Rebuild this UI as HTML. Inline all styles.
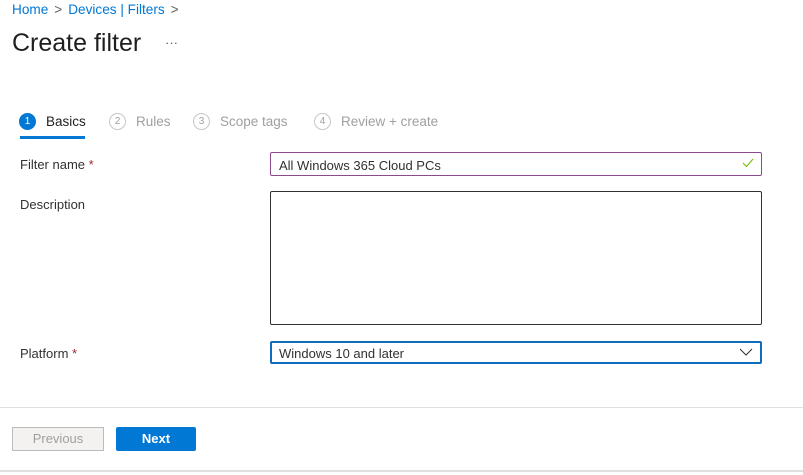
<!DOCTYPE html>
<html><head><style>
body{margin:0;width:803px;height:475px;background:#fff;font-family:"Liberation Sans",sans-serif;position:relative;overflow:hidden;color:#323130}
.a{position:absolute}
.crumb{left:12px;top:2px;font-size:13.6px;color:#0078d4}
.crumb span{color:#605e5c;margin:0 6px}
h1{position:absolute;left:12px;top:29px;margin:0;font-size:25px;font-weight:400;color:#201f1e}
.dots{left:165px;top:35px;font-size:13px;color:#605e5c}
.step{top:113px;font-size:13.5px;color:#a19f9d;display:flex;align-items:center}
.num{width:17px;height:17px;border:1px solid #c8c6c4;border-radius:50%;font-size:10px;display:flex;align-items:center;justify-content:center;margin-right:10px;box-sizing:border-box}
.lbl{left:20px;font-size:13px;color:#323130}
.lbl b{color:#a4262c;font-weight:400}
.box{left:270px;width:492px;box-sizing:border-box;border-radius:2px}
</style></head><body>
<div class="a crumb">Home<span>&gt;</span>Devices | Filters<span>&gt;</span></div>
<h1>Create filter</h1>
<div class="a dots">···</div>
<div class="a step" style="left:19px;color:#201f1e"><div class="num" style="background:#0078d4;border-color:#0078d4;color:#fff">1</div>Basics</div>
<div class="a" style="left:20px;top:136px;width:65px;height:3px;background:#0078d4"></div>
<div class="a step" style="left:109px"><div class="num">2</div>Rules</div>
<div class="a step" style="left:193px"><div class="num">3</div>Scope tags</div>
<div class="a step" style="left:314px"><div class="num">4</div>Review + create</div>
<div class="a lbl" style="top:157px">Filter name <b>*</b></div>
<div class="a box" style="top:152px;height:24px;border:1px solid #8a4b8e;font-size:13px;padding:5px 8px">All Windows 365 Cloud PCs</div>
<svg class="a" style="left:742px;top:158px" width="12" height="10"><path d="M1 5 L4.5 8.5 L11 1" stroke="#6bb700" fill="none" stroke-width="1"/></svg>
<div class="a lbl" style="top:197px">Description</div>
<div class="a box" style="top:191px;height:134px;border:1px solid #323130"></div>
<div class="a lbl" style="top:346px">Platform <b>*</b></div>
<div class="a box" style="top:341px;height:23px;border:2px solid #0f6cbd;font-size:13px;padding:3px 7px">Windows 10 and later</div>
<svg class="a" style="left:739px;top:347px" width="14" height="10"><path d="M1 2 L7 8 L13 2" stroke="#323130" fill="none" stroke-width="1"/></svg>
<div class="a" style="left:0;top:407px;width:803px;height:1px;background:#e1dfdd"></div>
<div class="a" style="left:12px;top:427px;width:92px;height:24px;box-sizing:border-box;border:1px solid #bbb;background:#f3f2f1;color:#a19f9d;font-size:13px;text-align:center;line-height:22px">Previous</div>
<div class="a" style="left:116px;top:427px;width:80px;height:24px;background:#0078d4;color:#fff;font-size:13px;font-weight:bold;text-align:center;line-height:24px;border-radius:2px">Next</div>
<div class="a" style="left:0;top:470px;width:803px;height:2px;background:#e1dfdd"></div>
</body></html>
